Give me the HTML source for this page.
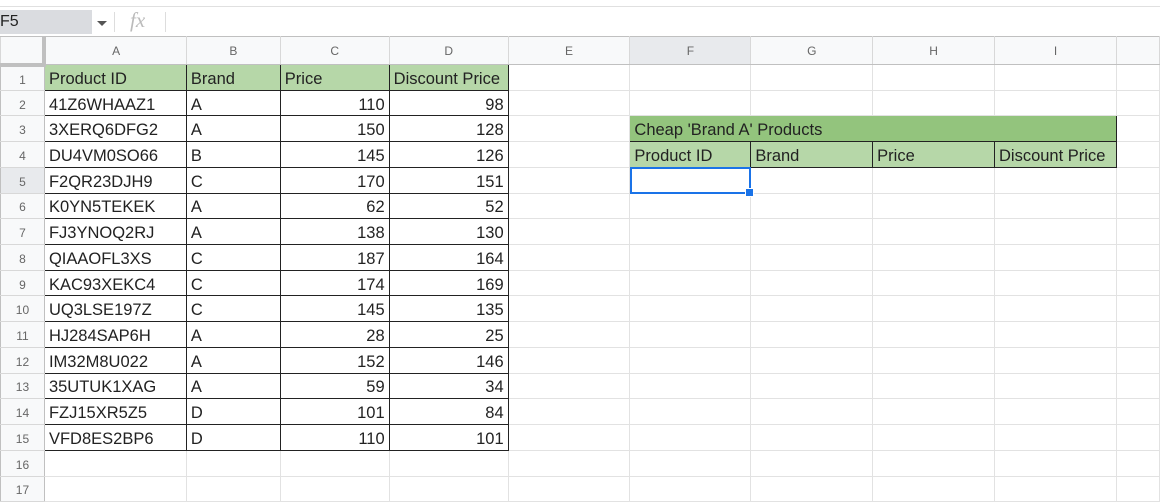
<!DOCTYPE html>
<html><head><meta charset="utf-8"><style>
*{margin:0;padding:0;box-sizing:border-box}
body{width:1160px;height:494px;overflow:hidden;background:#fff;font-family:"Liberation Sans",Arial,sans-serif;position:relative}
.fbar{position:absolute;left:0;border-top:1px solid #e0e0e0;top:6px;width:1160px;height:30px}
.nb{position:absolute;left:0;top:3px;width:92px;height:24px;background:#dadce0;font-size:16px;line-height:24px;color:#222}
.arr{position:absolute;left:97px;top:14px;width:0;height:0;border-left:5px solid transparent;border-right:5px solid transparent;border-top:5px solid #555}
.sep{position:absolute;top:5px;width:1px;height:20px;background:#ddd}
.fx{position:absolute;left:130px;top:1px;font-family:"Liberation Serif",serif;font-style:italic;font-size:21px;color:#bbb}
table{position:absolute;left:0;top:36px;border-collapse:collapse;table-layout:fixed;font-size:16.5px;color:#222}
td{border:1px solid #e2e2e2;height:25.73px;padding:3px 4px 0 4px;white-space:nowrap;overflow:hidden;line-height:20px}
tr.h td{height:28px;padding-top:0;background:#f8f9fa;color:#666;font-size:12px;text-align:center;border-color:#c0c0c0 #d8d8d8}
td.rh{background:#f8f9fa;color:#666;font-size:12px;text-align:center;border-color:#d8d8d8 #c0c0c0}
tr.h td.corner{border-right:4px solid #c0c0c0;border-bottom:4px solid #c0c0c0}
tr.h td.sel{background:#e8eaed}
td.rh.sel{background:#e8eaed}
.g{background:#b6d7a8}
.gg{background:#93c47d}
.b{border:1px solid #222}
.r{text-align:right}
.cur{position:absolute;left:630px;top:167px;width:121px;height:27px;border:2px solid #1a73e8}
.cur:after{content:"";position:absolute;right:-5px;bottom:-5px;width:7px;height:7px;background:#1a73e8;border:1px solid #fff}
</style></head><body>
<div class="fbar"><div class="nb">F5</div><div class="arr"></div><div class="sep" style="left:114px"></div><div class="fx">fx</div><div class="sep" style="left:165px"></div></div>
<table>
<colgroup><col style="width:44px"><col style="width:142px"><col style="width:94px"><col style="width:109px"><col style="width:119px"><col style="width:122px"><col style="width:121px"><col style="width:122px"><col style="width:122px"><col style="width:122px"><col style="width:43px"></colgroup>
<tr class="h"><td class="corner"></td><td>A</td><td>B</td><td>C</td><td>D</td><td>E</td><td class="sel">F</td><td>G</td><td>H</td><td>I</td><td></td></tr>
<tr><td class="rh">1</td><td class="g b">Product ID</td><td class="g b">Brand</td><td class="g b">Price</td><td class="g b">Discount Price</td><td></td><td></td><td></td><td></td><td></td><td></td></tr>
<tr><td class="rh">2</td><td class="b">41Z6WHAAZ1</td><td class="b">A</td><td class="b r">110</td><td class="b r">98</td><td></td><td></td><td></td><td></td><td></td><td></td></tr>
<tr><td class="rh">3</td><td class="b">3XERQ6DFG2</td><td class="b">A</td><td class="b r">150</td><td class="b r">128</td><td></td><td class="gg b" colspan="4">Cheap 'Brand A' Products</td><td></td></tr>
<tr><td class="rh">4</td><td class="b">DU4VM0SO66</td><td class="b">B</td><td class="b r">145</td><td class="b r">126</td><td></td><td class="g b">Product ID</td><td class="g b">Brand</td><td class="g b">Price</td><td class="g b">Discount Price</td><td></td></tr>
<tr><td class="rh sel">5</td><td class="b">F2QR23DJH9</td><td class="b">C</td><td class="b r">170</td><td class="b r">151</td><td></td><td></td><td></td><td></td><td></td><td></td></tr>
<tr><td class="rh">6</td><td class="b">K0YN5TEKEK</td><td class="b">A</td><td class="b r">62</td><td class="b r">52</td><td></td><td></td><td></td><td></td><td></td><td></td></tr>
<tr><td class="rh">7</td><td class="b">FJ3YNOQ2RJ</td><td class="b">A</td><td class="b r">138</td><td class="b r">130</td><td></td><td></td><td></td><td></td><td></td><td></td></tr>
<tr><td class="rh">8</td><td class="b">QIAAOFL3XS</td><td class="b">C</td><td class="b r">187</td><td class="b r">164</td><td></td><td></td><td></td><td></td><td></td><td></td></tr>
<tr><td class="rh">9</td><td class="b">KAC93XEKC4</td><td class="b">C</td><td class="b r">174</td><td class="b r">169</td><td></td><td></td><td></td><td></td><td></td><td></td></tr>
<tr><td class="rh">10</td><td class="b">UQ3LSE197Z</td><td class="b">C</td><td class="b r">145</td><td class="b r">135</td><td></td><td></td><td></td><td></td><td></td><td></td></tr>
<tr><td class="rh">11</td><td class="b">HJ284SAP6H</td><td class="b">A</td><td class="b r">28</td><td class="b r">25</td><td></td><td></td><td></td><td></td><td></td><td></td></tr>
<tr><td class="rh">12</td><td class="b">IM32M8U022</td><td class="b">A</td><td class="b r">152</td><td class="b r">146</td><td></td><td></td><td></td><td></td><td></td><td></td></tr>
<tr><td class="rh">13</td><td class="b">35UTUK1XAG</td><td class="b">A</td><td class="b r">59</td><td class="b r">34</td><td></td><td></td><td></td><td></td><td></td><td></td></tr>
<tr><td class="rh">14</td><td class="b">FZJ15XR5Z5</td><td class="b">D</td><td class="b r">101</td><td class="b r">84</td><td></td><td></td><td></td><td></td><td></td><td></td></tr>
<tr><td class="rh">15</td><td class="b">VFD8ES2BP6</td><td class="b">D</td><td class="b r">110</td><td class="b r">101</td><td></td><td></td><td></td><td></td><td></td><td></td></tr>
<tr><td class="rh">16</td><td></td><td></td><td></td><td></td><td></td><td></td><td></td><td></td><td></td><td></td></tr>
<tr><td class="rh">17</td><td></td><td></td><td></td><td></td><td></td><td></td><td></td><td></td><td></td><td></td></tr>
</table>
<div class="cur"></div>
</body></html>
